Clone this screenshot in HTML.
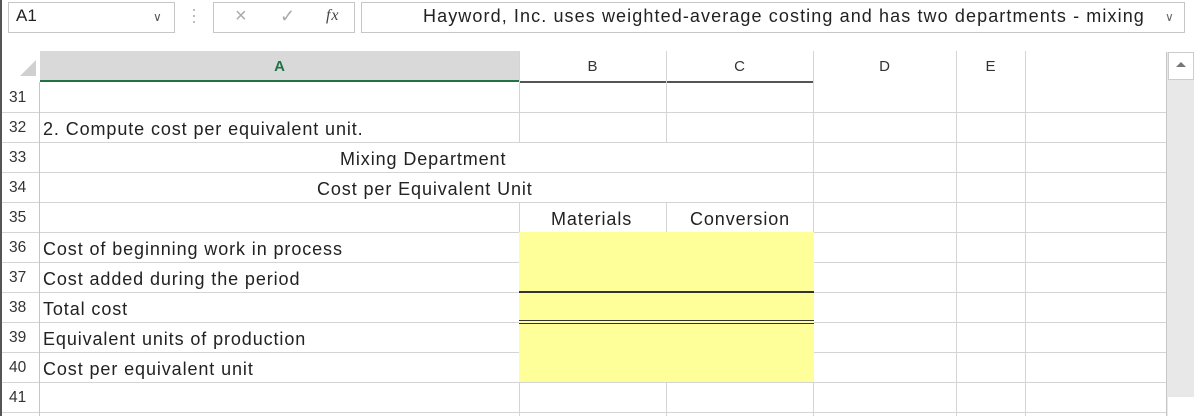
<!DOCTYPE html>
<html><head><style>
body{margin:0;width:1194px;height:416px;background:#fff;position:relative;overflow:hidden;font-family:"Liberation Sans",sans-serif;color:#222}
.a{position:absolute}
.hl{position:absolute;height:1px;background:#d4d4d4}
.vl{position:absolute;width:1px;background:#d4d4d4}
.t{position:absolute;font-size:18px;letter-spacing:0.9px;line-height:30px;white-space:nowrap}
.rn{position:absolute;left:2px;width:36px;text-align:left;padding-left:7px;box-sizing:border-box;font-size:15.5px;line-height:30px;color:#333}
.ch{position:absolute;top:52px;height:29px;line-height:29px;text-align:center;font-size:15px;color:#333}
</style></head><body>
<div class="a" style="left:0;top:0;width:2px;height:416px;background:#555"></div>
<div class="a" style="left:8px;top:2px;width:167px;height:31px;border:1px solid #c6c6c6;box-sizing:border-box"></div>
<div class="t" style="left:16px;top:1px;font-size:17px;letter-spacing:0">A1</div>
<div class="t" style="left:153px;top:2px;font-size:12px;color:#555">&#x2228;</div>
<div class="a" style="left:193px;top:9px;width:2px;height:2px;background:#bbb;box-shadow:0 6px #bbb,0 12px #bbb"></div>
<div class="a" style="left:213px;top:2px;width:142px;height:31px;border:1px solid #c6c6c6;box-sizing:border-box"></div>
<div class="t" style="left:235px;top:1px;font-size:20px;color:#aaa">×</div>
<div class="t" style="left:280px;top:1px;font-size:18px;color:#aaa">✓</div>
<div class="t" style="left:326px;top:1px;font-size:16px;font-style:italic;font-family:'Liberation Serif',serif;color:#444">fx</div>
<div class="a" style="left:361px;top:2px;width:824px;height:31px;border:1px solid #c6c6c6;box-sizing:border-box"></div>
<div class="t" style="left:423px;top:1px;letter-spacing:1.1px">Hayword, Inc. uses weighted-average costing and has two departments - mixing</div>
<div class="t" style="left:1165px;top:2px;font-size:12px;color:#666">&#x2228;</div>
<div class="a" style="left:2px;top:51px;width:1164px;height:31px;background:#fff"></div>
<div class="a" style="left:40px;top:51px;width:479px;height:31px;background:#d9d9d9"></div>
<div class="a" style="left:40px;top:80px;width:479px;height:2px;background:#217346"></div>
<div class="a" style="left:519px;top:81px;width:294px;height:2px;background:#555"></div>
<svg class="a" style="left:20px;top:60px" width="16" height="16"><polygon points="16,0 16,16 0,16" fill="#d0d0d0"/></svg>
<div class="ch" style="left:40px;width:479px;color:#217346;font-weight:bold">A</div>
<div class="ch" style="left:519px;width:147px">B</div>
<div class="ch" style="left:666px;width:147px">C</div>
<div class="ch" style="left:813px;width:143px">D</div>
<div class="ch" style="left:956px;width:69px">E</div>
<div class="vl" style="left:519px;top:51px;height:31px"></div>
<div class="vl" style="left:666px;top:51px;height:31px"></div>
<div class="vl" style="left:813px;top:51px;height:31px"></div>
<div class="vl" style="left:956px;top:51px;height:31px"></div>
<div class="vl" style="left:1025px;top:51px;height:31px"></div>
<div class="hl" style="left:2px;top:112px;width:1164px"></div>
<div class="hl" style="left:2px;top:142px;width:1164px"></div>
<div class="hl" style="left:2px;top:172px;width:1164px"></div>
<div class="hl" style="left:2px;top:202px;width:1164px"></div>
<div class="hl" style="left:2px;top:232px;width:1164px"></div>
<div class="hl" style="left:2px;top:262px;width:1164px"></div>
<div class="hl" style="left:2px;top:292px;width:1164px"></div>
<div class="hl" style="left:2px;top:322px;width:1164px"></div>
<div class="hl" style="left:2px;top:352px;width:1164px"></div>
<div class="hl" style="left:2px;top:382px;width:1164px"></div>
<div class="hl" style="left:2px;top:412px;width:1164px"></div>
<div class="vl" style="left:39px;top:82px;height:334px;background:#c6c6c6"></div>
<div class="vl" style="left:519px;top:82px;height:334px"></div>
<div class="vl" style="left:666px;top:82px;height:334px"></div>
<div class="vl" style="left:813px;top:82px;height:334px"></div>
<div class="vl" style="left:956px;top:82px;height:334px"></div>
<div class="vl" style="left:1025px;top:82px;height:334px"></div>
<div class="vl" style="left:1166px;top:52px;height:364px;background:#c6c6c6"></div>
<div class="a" style="left:519px;top:143px;width:294px;height:59px;background:#fff"></div>
<div class="hl" style="left:519px;top:172px;width:294px"></div>
<div class="a" style="left:519px;top:232px;width:295px;height:150px;background:#ffff99"></div>
<div class="a" style="left:519px;top:291px;width:295px;height:2px;background:#333"></div>
<div class="a" style="left:519px;top:320px;width:295px;height:1px;background:#333"></div>
<div class="a" style="left:519px;top:323px;width:295px;height:1px;background:#333"></div>
<div class="a" style="left:1167px;top:52px;width:27px;height:364px;background:#e8e8e8"></div>
<div class="a" style="left:1168px;top:52px;width:26px;height:28px;background:#fff;border:1px solid #ccc;box-sizing:border-box"></div>
<svg class="a" style="left:1175px;top:61px" width="12" height="8"><polygon points="6,1 11,6 1,6" fill="#777"/></svg>
<div class="a" style="left:1168px;top:397px;width:26px;height:19px;background:#fff"></div>
<div class="rn" style="top:83px">31</div>
<div class="rn" style="top:113px">32</div>
<div class="rn" style="top:143px">33</div>
<div class="rn" style="top:173px">34</div>
<div class="rn" style="top:203px">35</div>
<div class="rn" style="top:233px">36</div>
<div class="rn" style="top:263px">37</div>
<div class="rn" style="top:293px">38</div>
<div class="rn" style="top:323px">39</div>
<div class="rn" style="top:353px">40</div>
<div class="rn" style="top:383px">41</div>
<div class="t" style="left:43px;top:114px">2. Compute cost per equivalent unit.</div>
<div class="t" style="left:340px;top:144px">Mixing Department</div>
<div class="t" style="left:317px;top:174px">Cost per Equivalent Unit</div>
<div class="t" style="left:551px;top:204px">Materials</div>
<div class="t" style="left:690px;top:204px">Conversion</div>
<div class="t" style="left:43px;top:234px">Cost of beginning work in process</div>
<div class="t" style="left:43px;top:264px">Cost added during the period</div>
<div class="t" style="left:43px;top:294px">Total cost</div>
<div class="t" style="left:43px;top:324px">Equivalent units of production</div>
<div class="t" style="left:43px;top:354px">Cost per equivalent unit</div>
</body></html>
